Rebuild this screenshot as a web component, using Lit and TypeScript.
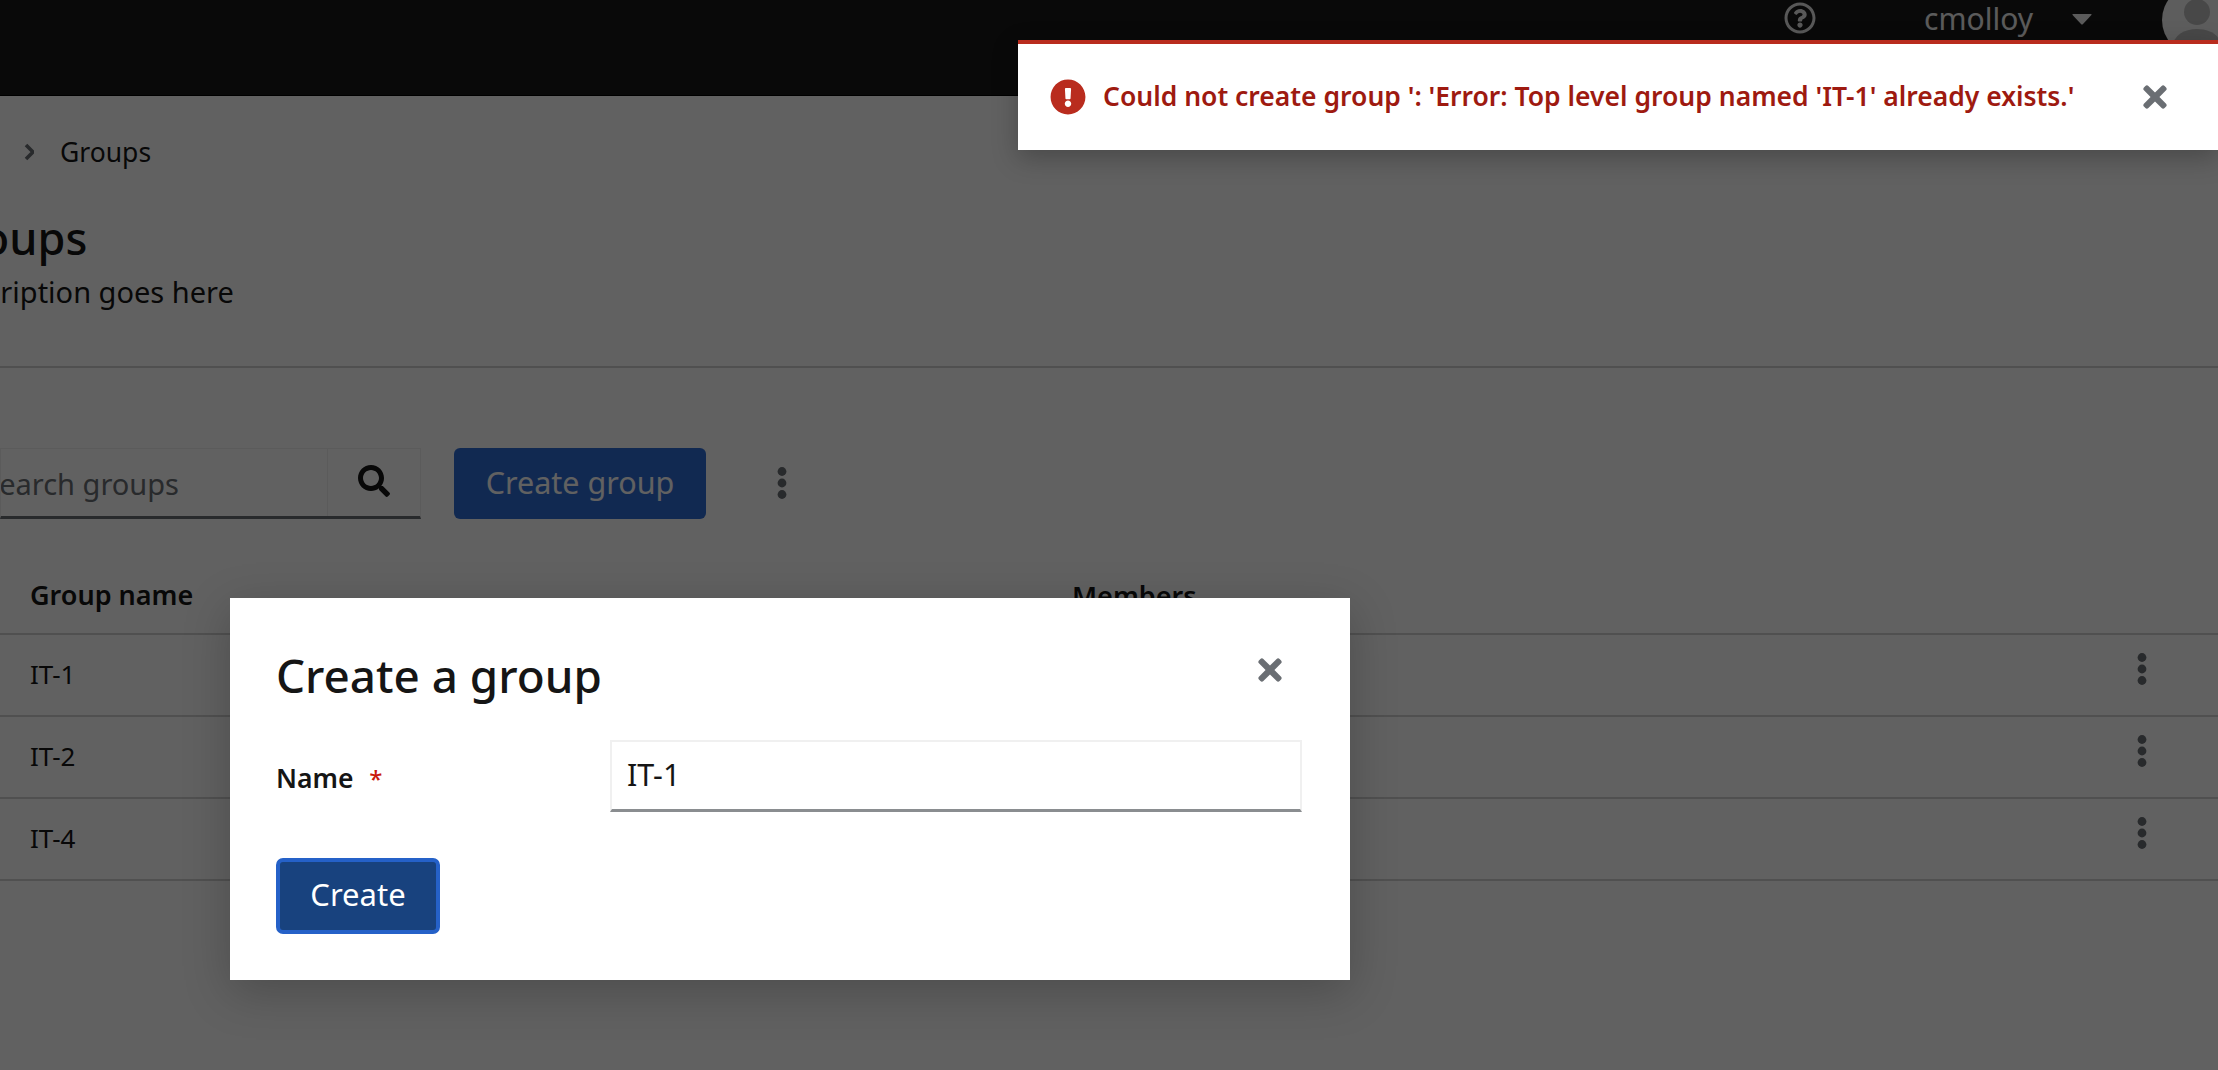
import { LitElement, html, css } from "lit";
import { customElement } from "lit/decorators.js";

const X = "M242.72 256l100.07-100.07c12.28-12.28 12.28-32.19 0-44.48l-22.24-22.24c-12.28-12.28-32.19-12.28-44.48 0L176 189.28 75.93 89.21c-12.28-12.28-32.19-12.28-44.48 0L9.21 111.45c-12.28 12.28-12.28 32.19 0 44.48L109.28 256 9.21 356.07c-12.28 12.28-12.28 32.19 0 44.48l22.24 22.24c12.28 12.28 32.2 12.28 44.48 0L176 322.72l100.07 100.07c12.28 12.28 32.2 12.28 44.48 0l22.24-22.24c12.28-12.28 12.28-32.19 0-44.48L242.72 256z";
const SEARCH = "M505 442.7L405.3 343c-4.5-4.5-10.6-7-17-7H372c27.6-35.3 44-79.7 44-128C416 93.1 322.9 0 208 0S0 93.1 0 208s93.1 208 208 208c48.3 0 92.7-16.4 128-44v16.3c0 6.4 2.5 12.5 7 17l99.7 99.7c9.4 9.4 24.6 9.4 33.9 0l28.3-28.3c9.4-9.4 9.4-24.6.1-34zM208 336c-70.7 0-128-57.2-128-128 0-70.7 57.2-128 128-128 70.7 0 128 57.2 128 128 0 70.7-57.2 128-128 128z";
const ERR = "M504 256c0 136.997-111.043 248-248 248S8 392.997 8 256C8 119.083 119.043 8 256 8s248 111.083 248 248zm-248 50c-25.405 0-46 20.595-46 46s20.595 46 46 46 46-20.595 46-46-20.595-46-46-46zm-43.673-165.346l7.418 136c.347 6.364 5.609 11.346 11.982 11.346h48.546c6.373 0 11.635-4.982 11.982-11.346l7.418-136c.375-6.874-5.098-12.654-11.982-12.654h-63.383c-6.884 0-12.356 5.78-11.981 12.654z";
const HELP = "M256 8C119.043 8 8 119.083 8 256c0 136.997 111.043 248 248 248s248-111.003 248-248C504 119.083 392.957 8 256 8zm0 448c-110.532 0-200-89.431-200-200 0-110.495 89.472-200 200-200 110.491 0 200 89.471 200 200 0 110.53-89.431 200-200 200zm107.244-255.2c0 67.052-72.421 68.084-72.421 92.863V300c0 6.627-5.373 12-12 12h-45.647c-6.627 0-12-5.373-12-12v-8.659c0-35.745 27.1-50.034 47.579-61.516 17.561-9.845 28.324-16.541 28.324-29.579 0-17.246-21.999-28.693-39.784-28.693-23.189 0-33.894 10.977-48.942 29.969-4.057 5.12-11.46 6.071-16.666 2.124l-27.824-21.098c-5.107-3.872-6.251-11.066-2.644-16.363C184.846 131.491 214.94 112 261.794 112c49.071 0 101.45 38.304 101.45 88.8zM298 368c0 23.159-18.841 42-42 42s-42-18.841-42-42 18.841-42 42-42 42 18.841 42 42z";

const kebab = () => html`<svg class="kebab" viewBox="0 0 10 32" width="10" height="32" aria-hidden="true">
  <circle cx="5" cy="4.5" r="4.4"></circle><circle cx="5" cy="16" r="4.4"></circle><circle cx="5" cy="27.5" r="4.4"></circle></svg>`;
const close = (cls: string) => html`<svg class=${cls} viewBox="0 0 352 512" width="24" height="34" aria-hidden="true"><path d=${X}></path></svg>`;

@customElement("app-root")
export class AppRoot extends LitElement {
  static styles = css`
    :host {
      display: block;
      position: relative;
      width: 2218px;
      height: 1070px;
      overflow: hidden;
      background: #fff;
      font-family: "Noto Sans", "Lato", sans-serif;
      color: #151515;
    }
    .masthead {
      height: 96px;
      background: #191919;
      display: flex;
      justify-content: flex-end;
      align-items: flex-start;
      overflow: hidden;
      box-sizing: border-box;
      border-bottom: 1px solid #000;
    }
    .help { margin: 2px 108px 0 0; fill: #e8e8e8; }
    .user { font-size: 30px; line-height: 38px; color: #f0f0f0; font-weight: 400; }
    .caret { margin: 14px 70px 0 39px; fill: #f0f0f0; }
    .avatar { margin: -15px -14px 0 0; flex: none; }
    .crumbs {
      height: 112px;
      display: flex;
      align-items: center;
      padding-left: 24px;
      gap: 26px;
      font-size: 26.5px;
    }
    .crumbs svg { stroke: #6a6e73; fill: none; stroke-width: 3.6; }
    .head { margin-left: -69px; height: 159px; box-sizing: border-box; }
    .head h1 { margin: 0; font-size: 45px; line-height: 56px; font-weight: 500; padding-top: 2px; }
    .head p { margin: 0; font-size: 29px; line-height: 44px; font-weight: 400; padding-top: 4px; margin-left: 4px; }
    .rule { height: 2px; background: #d2d2d2; margin-top: -1px; }
    .toolbar { display: flex; align-items: stretch; height: 71px; margin-top: 80px; }
    .search {
      display: flex;
      width: 421px;
      margin-right: 33px;
      box-sizing: border-box;
      border: 1px solid #f0f0f0;
      border-bottom: 3px solid #6a6e73;
    }
    .search .ph {
      flex: 1;
      min-width: 0;
      font-size: 29px;
      color: #6a6e73;
      display: flex;
      align-items: center;
      justify-content: flex-end;
      padding: 2px 148px 0 0;
      overflow: hidden;
      white-space: nowrap;
    }
    .search .go {
      width: 93px;
      flex: none;
      border-left: 1px solid #f0f0f0;
      display: flex;
      align-items: center;
      justify-content: center;
      padding-bottom: 4px;
      box-sizing: border-box;
    }
    .search .go svg { fill: #151515; }
    .primary {
      width: 252px;
      border-radius: 6px;
      background: #2f6cd6;
      color: #fff;
      font-size: 30.5px;
      display: flex;
      align-items: center;
      justify-content: center;
      padding-bottom: 4px;
      box-sizing: border-box;
    }
    .kebab { fill: #6a6e73; flex: none; }
    .toolbar .kebab { align-self: center; margin-left: 71px; margin-bottom: 2px; }
    .row {
      display: grid;
      grid-template-columns: 1042px 1fr 81px;
      padding-left: 30px;
      height: 82px;
      box-sizing: border-box;
      border-bottom: 2px solid #d2d2d2;
      align-items: center;
      font-size: 26px;
    }
    .row.top { height: 116px; font-weight: 600; font-size: 27px; padding-top: 39px; }
    .row .kebab { margin-bottom: 12px; }
    .row > span:first-child { padding-bottom: 2px; }
    .scrim { position: absolute; inset: 0; background: rgba(0, 0, 0, 0.62); }
    .toast {
      position: absolute;
      left: 1018px;
      top: 40px;
      width: 1200px;
      height: 110px;
      box-sizing: border-box;
      background: #fff;
      border-top: 4px solid #b92c1e;
      box-shadow: 0 8px 24px rgba(0, 0, 0, 0.25);
      display: flex;
      align-items: center;
      padding-left: 32px;
    }
    .toast .err { fill: #b92c1e; flex: none; }
    .toast .msg { margin-left: 17px; font-size: 26.5px; font-weight: 600; color: #9e1a10; white-space: nowrap; width: 1030px; padding-bottom: 2px; }
    .closer { fill: #6a6e73; flex: none; }
    .toast .closer { margin-left: 10px; }
    .modal {
      position: absolute;
      left: 230px;
      top: 598px;
      width: 1120px;
      height: 382px;
      box-sizing: border-box;
      background: #fff;
      box-shadow: 0 12px 44px rgba(0, 0, 0, 0.22);
      padding: 48px 48px 46px 46px;
      display: flex;
      flex-direction: column;
    }
    .mtitle { display: flex; justify-content: space-between; align-items: flex-start; }
    .mtitle h2 { margin: 0; font-size: 45.8px; line-height: 58px; font-weight: 500; color: #151515; }
    .mtitle .closer { margin: 7px 20px 0 0; }
    .field { display: flex; align-items: center; margin-top: 36px; }
    .field label { width: 334px; font-size: 26.5px; font-weight: 600; padding-top: 4px; }
    .field label span { color: #c9190b; margin-left: 9px; font-weight: 500; font-size: 24px; }
    .input {
      width: 692px;
      height: 72px;
      box-sizing: border-box;
      border: 2px solid #f0f0f0;
      border-bottom: 3px solid #8a8d90;
      font-size: 30.5px;
      display: flex;
      align-items: center;
      padding-left: 15px;
      padding-bottom: 4px;
    }
    .create {
      margin-top: 46px;
      width: 164px;
      height: 76px;
      box-sizing: border-box;
      border: 4px solid #2561c8;
      border-radius: 7px;
      background: #18427e;
      color: #fff;
      font-size: 31px;
      display: flex;
      align-items: center;
      justify-content: center;
      padding-bottom: 4px;
    }
  `;

  render() {
    return html`
      <div class="masthead">
        <svg class="help" viewBox="0 0 512 512" width="32" height="32" aria-hidden="true"><path d=${HELP}></path></svg>
        <span class="user">cmolloy</span>
        <svg class="caret" viewBox="0 0 20 11" width="20" height="11" aria-hidden="true"><path d="M1 0h18q1 0 .4 1L11 10q-1 1-2 0L.6 1Q0 0 1 0z"></path></svg>
        <svg class="avatar" viewBox="0 0 70 70" width="70" height="70" aria-hidden="true">
          <circle cx="35" cy="35" r="35" fill="#f5f5f5"></circle>
          <circle cx="35" cy="27" r="13" fill="#bdbdbd"></circle>
          <path d="M10 62c2-12 12-18 25-18s23 6 25 18l-10 8H20z" fill="#bdbdbd"></path>
        </svg>
      </div>
      <nav class="crumbs">
        <svg viewBox="0 0 10 18" width="10" height="18" aria-hidden="true"><path d="M2 2l7 7-7 7"></path></svg>
        <span>Groups</span>
      </nav>
      <section class="head">
        <h1>Groups</h1>
        <p>Description goes here</p>
      </section>
      <div class="rule"></div>
      <div class="toolbar">
        <div class="search">
          <div class="ph">Search groups</div>
          <div class="go"><svg viewBox="0 0 512 512" width="32" height="32" aria-hidden="true"><path d=${SEARCH}></path></svg></div>
        </div>
        <div class="primary">Create group</div>
        ${kebab()}
      </div>
      <div class="table">
        <div class="row top"><span>Group name</span><span>Members</span><span></span></div>
        ${["IT-1", "IT-2", "IT-4"].map(n => html`<div class="row"><span>${n}</span><span></span>${kebab()}</div>`)}
      </div>
      <div class="scrim"></div>
      <div class="toast" role="alert">
        <svg class="err" viewBox="0 0 512 512" width="36" height="36" aria-hidden="true"><path d=${ERR}></path></svg>
        <span class="msg">Could not create group ': 'Error: Top level group named 'IT-1' already exists.'</span>
        ${close("closer")}
      </div>
      <div class="modal" role="dialog">
        <div class="mtitle"><h2>Create a group</h2>${close("closer")}</div>
        <div class="field">
          <label>Name <span>*</span></label>
          <div class="input">IT-1</div>
        </div>
        <div class="create">Create</div>
      </div>
    `;
  }
}
